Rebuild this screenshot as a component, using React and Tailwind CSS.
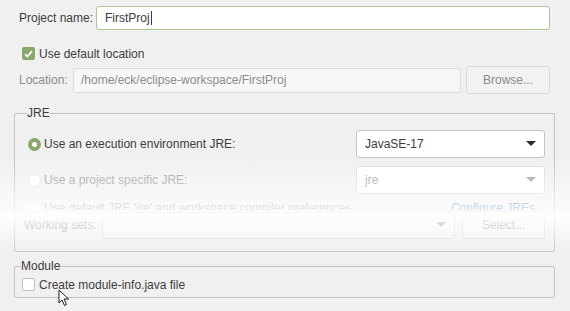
import React from "react";

const font = { fontFamily: '"Liberation Sans", Arial, sans-serif' };

const Caret = ({ className }) => (
  <svg width="10" height="6" viewBox="0 0 10 6" className={className}>
    <path d="M0 0 L10 0 L5 5 Z" fill="currentColor" />
  </svg>
);

const Radio = ({ checked, faded }) =>
  checked ? (
    <span className="w-[13px] h-[13px] rounded-full bg-[#87a96b] flex items-center justify-center shrink-0">
      <span className="w-[5px] h-[5px] rounded-full bg-white" />
    </span>
  ) : (
    <span
      className={
        "w-[13px] h-[13px] rounded-full border shrink-0 " +
        (faded ? "border-[#e0e0e0] bg-white" : "border-[#bdbdbd] bg-white")
      }
    />
  );

const Cursor = () => (
  <svg
    width="12"
    height="18"
    viewBox="0 0 12 18"
    className="absolute left-[58px] top-[289px]"
  >
    <path
      d="M1 1 L1 14 L4 11 L6.5 16.5 L8.5 15.5 L6 10 L10.5 10 Z"
      fill="#ffffff"
      stroke="#1a1a1a"
      strokeWidth="1"
      strokeLinejoin="round"
    />
  </svg>
);

export default function App() {
  return (
    <div
      className="relative w-[570px] h-[311px] overflow-hidden bg-[#f0f0f0] text-[12px] text-[#3c3c3c]"
      style={font}
    >
      {/* project name */}
      <div className="flex items-center pl-[19px] pr-[20px] pt-[6px]">
        <span className="w-[77px] whitespace-nowrap">Project name:</span>
        <div className="flex-1 h-[24px] bg-white border border-[#a9c693] rounded-[3px] flex items-center px-[8px]">
          FirstProj
          <span className="w-px h-[14px] bg-[#3c3c3c] ml-[1px]" />
        </div>
      </div>

      {/* default location */}
      <div className="flex items-center h-[13px] gap-[4px] pl-[22px] mt-[17px]">
        <span className="w-[13px] h-[13px] rounded-[2px] bg-[#87a96b] flex items-center justify-center">
          <svg width="9" height="8" viewBox="0 0 9 8">
            <path d="M1 4.2 L3.4 6.5 L8 1.2" fill="none" stroke="#fff" strokeWidth="1.8" />
          </svg>
        </span>
        <span>Use default location</span>
      </div>

      {/* location */}
      <div className="flex items-center h-[28px] pl-[19px] pr-[20px] mt-[6px] text-[#8c8c8c]">
        <span className="w-[54px]">Location:</span>
        <div className="flex-1 h-[25px] bg-[#f7f7f7] border border-[#dcdcdc] rounded-[3px] flex items-center px-[7px]">
          /home/eck/eclipse-workspace/FirstProj
        </div>
        <div className="w-[84px] h-[28px] ml-[5px] border border-[#dadada] rounded-[3px] bg-[#f2f2f2] flex items-center justify-center">
          Browse...
        </div>
      </div>

      {/* JRE */}
      <fieldset className="ml-[14px] mr-[15px] mt-[12px] h-[146px] border border-[#c4c4c4] rounded-[2px] pl-[13px] pr-[9px] min-w-0">
        <legend className="text-[12px] leading-[14px] -ml-[1px]">JRE</legend>
        <div className="flex items-center mt-[10px]">
          <Radio checked />
          <span className="ml-[3px] flex-1">Use an execution environment JRE:</span>
          <div className="w-[189px] h-[28px] bg-white border border-[#c6c6c6] rounded-[3px] flex items-center justify-between px-[8px]">
            <span>JavaSE-17</span>
            <Caret className="text-[#2b2b2b]" />
          </div>
        </div>
        <div className="flex items-center mt-[8px] text-[#9a9a9a]">
          <Radio faded />
          <span className="ml-[3px] flex-1">Use a project specific JRE:</span>
          <div className="w-[189px] h-[28px] bg-white border border-[#dcdcdc] rounded-[3px] flex items-center justify-between px-[8px]">
            <span>jre</span>
            <Caret className="text-[#9a9a9a]" />
          </div>
        </div>
        <div className="flex h-[9px] overflow-hidden mt-[7px] text-[#9a9a9a]">
          <Radio faded />
          <span className="ml-[3px] flex-1 leading-[18px] -mt-[2px] whitespace-nowrap">
            Use default JRE 'jre' and workspace compiler preferences
          </span>
          <span className="text-[#3d7fc4] leading-[18px] -mt-[2px] whitespace-nowrap">Configure JREs...</span>
        </div>
        <div className="flex items-center -ml-[4px] mt-[1px] text-[#8c8c8c]">
          <span className="w-[78px] whitespace-nowrap">Working sets:</span>
          <div className="w-[353px] h-[27px] border border-[#d6d6d6] rounded-[3px] bg-[#f4f4f4] flex items-center justify-end px-[8px]">
            <Caret className="text-[#8c8c8c]" />
          </div>
          <div className="w-[83px] h-[28px] ml-[7px] border border-[#d6d6d6] rounded-[3px] bg-[#f4f4f4] flex items-center justify-center">
            Select...
          </div>
        </div>
      </fieldset>

      {/* Module */}
      <fieldset className="ml-[14px] mr-[15px] mt-[7px] h-[39px] border border-[#c4c4c4] rounded-[2px] px-[7px] min-w-0">
        <legend className="text-[12px] leading-[14px] -ml-[1px]">Module</legend>
        <div className="flex items-center h-[13px] gap-[4px] mt-[5px]">
          <span className="w-[13px] h-[13px] rounded-[2px] bg-white border border-[#c0c0c0]" />
          <span>Create module-info.java file</span>
        </div>
      </fieldset>

      {/* fade overlays */}
      <div className="absolute left-0 right-0 top-[158px] h-[55px] bg-gradient-to-b from-white/0 to-white/80 pointer-events-none" />
      <div className="absolute left-0 right-0 top-[213px] h-[40px] bg-gradient-to-b from-white/95 to-white/0 pointer-events-none" />

      <Cursor />
    </div>
  );
}
